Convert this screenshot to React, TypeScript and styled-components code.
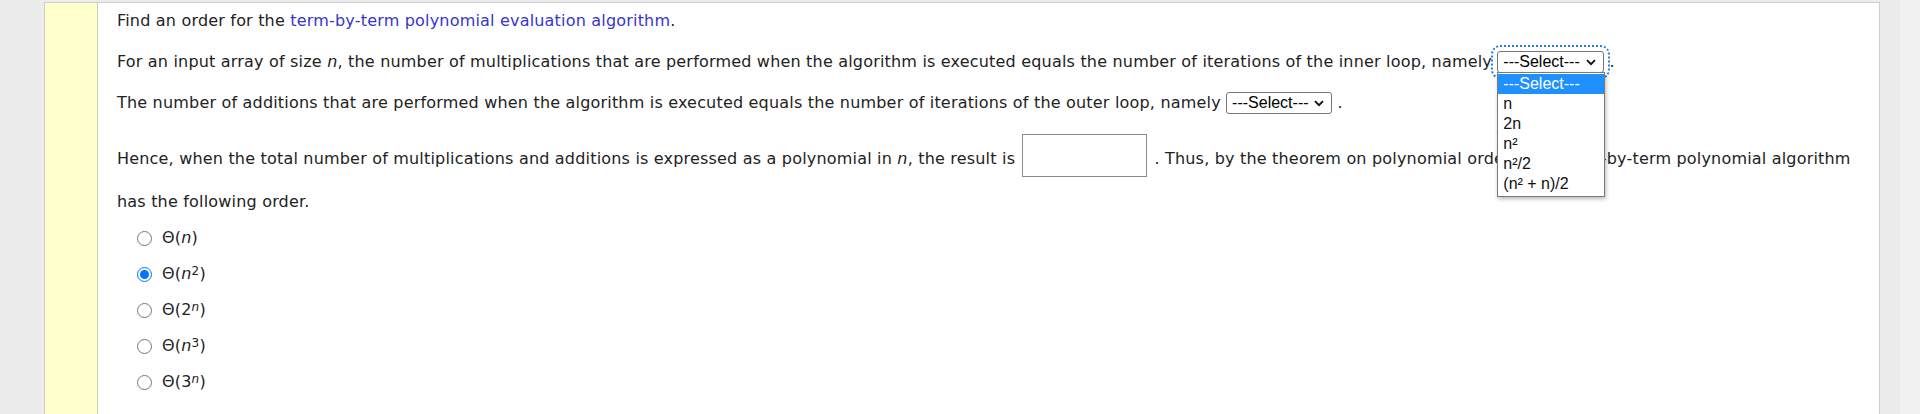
import React from "react"
import styled, { createGlobalStyle } from "styled-components"

const GlobalStyle = createGlobalStyle`
  html, body {
    margin: 0;
    padding: 0;
    height: 100%;
    overflow: hidden;
    background: #ececec;
  }
  body {
    font-family: "DejaVu Sans", Verdana, sans-serif;
  }
  #root {
    height: 100%;
  }
`

const Page = styled.div`
  display: flex;
  height: 100%;
`

const Main = styled.div`
  flex: 1;
  display: flex;
  flex-direction: column;
  padding: 2px 20px 0 44px;
`

const Track = styled.div`
  width: 20px;
  background: #f1f1f1;
`

const Card = styled.div`
  flex: 1;
  display: flex;
  background: #fff;
  border: 1px solid #cfcfcf;
  border-bottom: none;
`

const Gutter = styled.div`
  width: 52px;
  background: #ffffcc;
  border-right: 1px solid #d2d2b4;
`

const Content = styled.div`
  flex: 1;
  padding: 8px 19px 0 19px;
  color: #222;
  font-size: 16px;
  letter-spacing: 0.19px;
`

const Para = styled.p<{ $top?: number; $lh?: number }>`
  margin: ${(p) => p.$top ?? 0}px 0 0 0;
  line-height: ${(p) => p.$lh ?? 20}px;
`

const Link = styled.a`
  color: #3535d0;
  text-decoration: none;
`

const Var = styled.i`
  font-style: italic;
`

const Sup = styled.sup`
  font-size: 12px;
  line-height: 0;
  vertical-align: 4px;
`

const SelectWrap = styled.span`
  position: relative;
  display: inline-block;
`

const SelectBox = styled.span<{ $focused?: boolean; $w?: number }>`
  display: inline-flex;
  align-items: center;
  justify-content: space-between;
  box-sizing: border-box;
  width: ${(p) => p.$w ?? 107}px;
  height: 22px;
  padding: 0 7px 0 5px;
  border: 1px solid #767676;
  border-radius: 3px;
  background: #fff;
  color: #000;
  font-family: "Liberation Sans", Arial, sans-serif;
  font-size: 16px;
  line-height: 20px;
  letter-spacing: 0;
  outline: ${(p) => (p.$focused ? "2px dotted #1e82e6" : "none")};
  outline-offset: 4px;
`

const Chevron = () => (
  <svg width="10" height="7" viewBox="0 0 10 7" aria-hidden="true">
    <path d="M1 1.2 L5 5.2 L9 1.2" fill="none" stroke="#111" strokeWidth="1.9" />
  </svg>
)

const ListBox = styled.ul`
  position: absolute;
  top: 21px;
  left: 0;
  z-index: 10;
  width: 108px;
  box-sizing: border-box;
  margin: 0;
  padding: 1px 0 2px;
  list-style: none;
  background: #fff;
  border: 1px solid #7a7a7a;
  box-shadow: 1px 2px 4px rgba(0, 0, 0, 0.28);
  font-family: "Liberation Sans", Arial, sans-serif;
  font-size: 16px;
  line-height: 20px;
  letter-spacing: 0;
`

const Option = styled.li<{ $active?: boolean }>`
  height: 20px;
  padding-left: 5px;
  white-space: nowrap;
  background: ${(p) => (p.$active ? "#1e90ff" : "transparent")};
  color: ${(p) => (p.$active ? "#fff" : "#111")};
`

const AnswerInput = styled.input`
  box-sizing: border-box;
  width: 125px;
  height: 43px;
  margin: 0 7px 0 2px;
  padding: 0 4px;
  border: 1px solid #8a8a8a;
  border-radius: 0;
  font-family: "DejaVu Sans", Verdana, sans-serif;
  font-size: 16px;
  vertical-align: 3px;
  background: #fff;
`

const Choices = styled.div`
  display: flex;
  flex-direction: column;
  gap: 6px;
  padding-left: 20px;
`

const Choice = styled.label`
  display: flex;
  align-items: flex-start;
  line-height: 30px;
`

const Radio = styled.input`
  width: 15px;
  height: 15px;
  margin: 8px 10px 0 0;
`

const options = ["---Select---", "n", "2n", "n²", "n²/2", "(n² + n)/2"]

const choices: React.ReactNode[] = [
  <>Θ(<Var>n</Var>)</>,
  <>Θ(<Var>n</Var><Sup>2</Sup>)</>,
  <>Θ(2<Sup><Var>n</Var></Sup>)</>,
  <>Θ(<Var>n</Var><Sup>3</Sup>)</>,
  <>Θ(3<Sup><Var>n</Var></Sup>)</>,
]

export default function App() {
  return (
    <>
      <GlobalStyle />
      <Page>
        <Main>
          <Card>
            <Gutter />
            <Content>
              <Para>
                Find an order for the <Link href="#">term-by-term polynomial evaluation algorithm</Link>.
              </Para>
              <Para $top={20}>
                For an input array of size <Var>n</Var>, the number of multiplications that are performed when the
                algorithm is executed equals the number of iterations of the inner loop, namely{" "}
                <SelectWrap>
                  <SelectBox $focused>
                    ---Select--- <Chevron />
                  </SelectBox>
                  <ListBox>
                    {options.map((o, i) => (
                      <Option key={o} $active={i === 0}>
                        {o}
                      </Option>
                    ))}
                  </ListBox>
                </SelectWrap>{" "}
                .
              </Para>
              <Para $top={19}>
                The number of additions that are performed when the algorithm is executed equals the number of
                iterations of the outer loop, namely{" "}
                <SelectBox $w={106}>
                  ---Select--- <Chevron />
                </SelectBox>{" "}
                .
              </Para>
              <Para $top={20} $lh={43}>
                Hence, when the total number of multiplications and additions is expressed as a polynomial in{" "}
                <Var>n</Var>, the result is <AnswerInput type="text" />. Thus, by the theorem on polynomial orders,
                the term-by-term polynomial algorithm has the following order.
              </Para>
              <Choices>
                {choices.map((c, i) => (
                  <Choice key={i}>
                    <Radio type="radio" name="order" defaultChecked={i === 1} />
                    <span>{c}</span>
                  </Choice>
                ))}
              </Choices>
            </Content>
          </Card>
        </Main>
        <Track />
      </Page>
    </>
  )
}
